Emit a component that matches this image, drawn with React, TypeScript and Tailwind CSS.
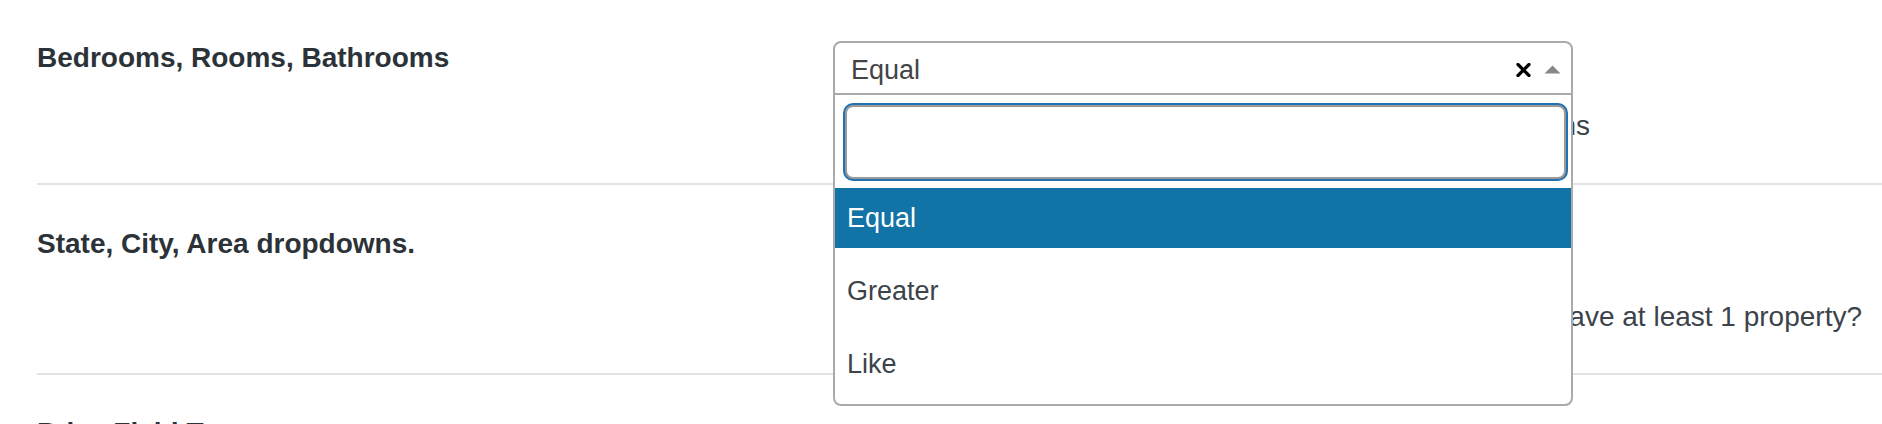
const options = ["Equal", "Greater", "Like"];

const CompareDropdown = () => {
  return (
    <div className="absolute left-[833px] top-[41px] w-[740px] h-[365px] rounded-[8px] border-2 border-[#aaa] bg-white">
      <div className="flex h-[52px] items-center justify-between border-b-2 border-[#aaa] pl-[16px] pr-[10px] pt-[4px]">
        <span className="text-[27px] text-[#444]">Equal</span>
        <div className="flex items-center gap-[13px]">
          <svg width="15" height="14" viewBox="0 0 15 14">
            <path d="M2 1.5 L13 12.5 M13 1.5 L2 12.5" stroke="#000" strokeWidth="3.2" strokeLinecap="round" />
          </svg>
          <svg width="17" height="9" viewBox="0 0 17 9" className="mt-[-2px]">
            <path d="M0.5 8.5 L8.5 0.5 L16.5 8.5 Z" fill="#888" />
          </svg>
        </div>
      </div>
      <div className="pl-[10px] pr-[5px] pt-[10px] pb-[9px]">
        <input
          type="text"
          className="block h-[74px] w-full rounded-[8px] border-2 border-[#9a9a9a] bg-white px-3 text-[27px] shadow-[0_0_0_2px_#2271b1] outline-none"
        />
      </div>
      <ul className="flex flex-col gap-[13px]">
        {options.map((option, i) => (
          <li
            key={option}
            className={
              i === 0
                ? "flex h-[60px] items-center bg-[#1273a6] pl-[12px] text-[27px] text-white"
                : "flex h-[60px] items-center pl-[12px] text-[27px] text-[#3c434a]"
            }
          >
            {option}
          </li>
        ))}
      </ul>
    </div>
  );
};

const App = () => {
  return (
    <div className="relative h-[424px] overflow-hidden bg-white font-['Liberation_Sans',Arial,sans-serif]">
      <div className="pl-[37px]">
        <div className="flex h-[185px] border-b-2 border-[#e4e4e4]">
          <div className="w-[796px] pt-[40px] text-[28px] font-bold leading-[36px] text-[#2c3338]">
            Bedrooms, Rooms, Bathrooms
          </div>
          <div className="pt-[108px]">
            <p className="w-[757px] whitespace-nowrap text-right text-[28px] leading-[36px] text-[#3c434a]">
              Show Bedrooms, Rooms, Bathrooms
            </p>
          </div>
        </div>
        <div className="flex h-[190px] border-b-2 border-[#e4e4e4]">
          <div className="w-[796px] pt-[41px] text-[28px] font-bold leading-[36px] text-[#2c3338]">
            State, City, Area dropdowns.
          </div>
          <div className="pt-[114px]">
            <p className="w-[1029px] whitespace-nowrap text-right text-[28px] leading-[36px] text-[#3c434a]">
              Show only states, cities and areas that have at least 1 property?
            </p>
          </div>
        </div>
        <div className="flex">
          <div className="w-[796px] pt-[40px] text-[28px] font-bold leading-[36px] text-[#2c3338]">
            Price Field Type
          </div>
        </div>
      </div>
      <CompareDropdown />
    </div>
  );
};

export default App;
